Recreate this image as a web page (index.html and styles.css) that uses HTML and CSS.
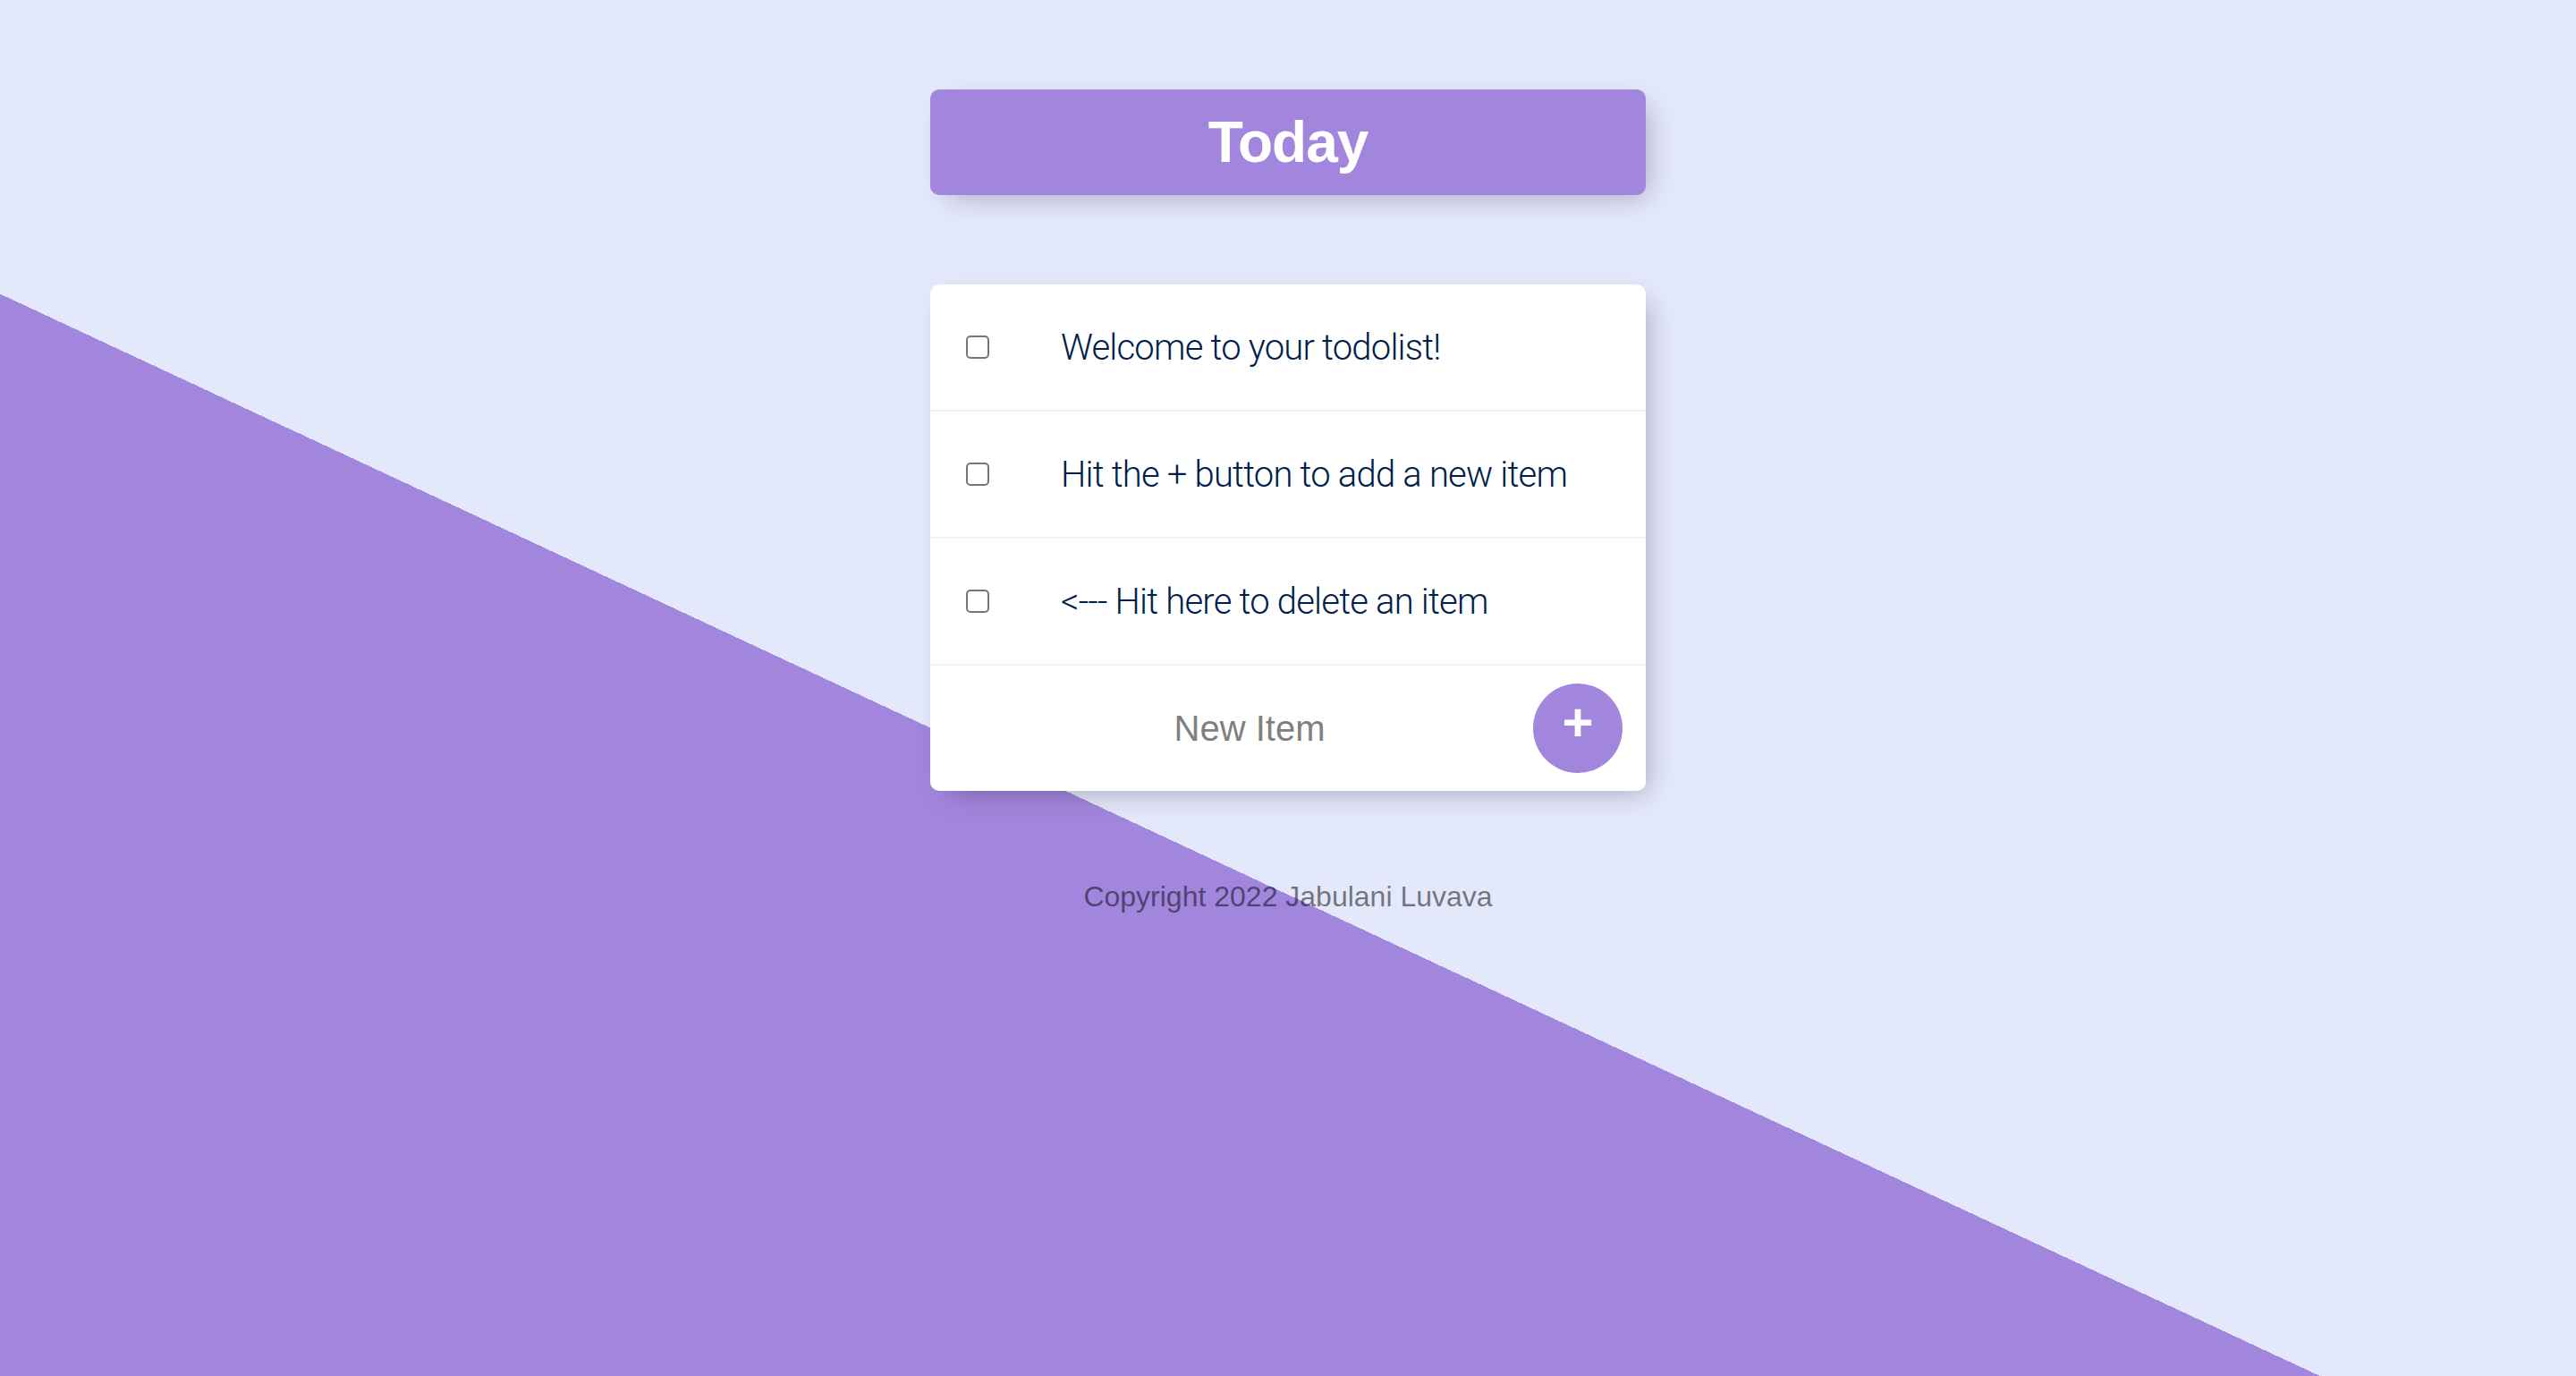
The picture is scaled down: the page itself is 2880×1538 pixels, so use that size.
FILE: index.html
```html
<!DOCTYPE html>
<html lang="en">
<head>
<meta charset="utf-8">
<title>To Do List</title>
<link rel="stylesheet" href="styles.css">
</head>
<body>
  <div class="box heading">
    <h1>Today</h1>
  </div>
  <div class="box">
    <div class="item">
      <input type="checkbox" class="check">
      <p>Welcome to your todolist!</p>
    </div>
    <div class="item">
      <input type="checkbox" class="check">
      <p>Hit the + button to add a new item</p>
    </div>
    <div class="item">
      <input type="checkbox" class="check">
      <p>&lt;--- Hit here to delete an item</p>
    </div>
    <form class="item new-form"><input type="text" class="new-input" placeholder="New Item" autocomplete="off"><button type="button" class="add-btn">+</button></form>
  </div>
  <footer class="footer">Copyright 2022 Jabulani Luvava</footer>
</body>
</html>
```
FILE: styles.css
```css
html {
  background-color: #E4E8FB;
  background-image: linear-gradient(25deg, #A286DE 50%, #E4E8FB 50%);
  min-height: 2000px;
  font-family: "Liberation Sans", Arial, sans-serif;
  font-size: 32px;
}

body {
  margin: 0;
  padding: 0 16px;
}

.box {
  max-width: 800px;
  margin: 100px auto;
  background: #fff;
  border-radius: 10px;
  box-shadow: 10px 10px 30px -10px rgba(0, 0, 0, 0.3);
}

.heading {
  background-color: #A286DE;
  text-align: center;
}

.heading h1 {
  color: #fff;
  padding: 20px;
  margin: 0;
  font-size: 64px;
  font-weight: bold;
  line-height: 78px;
  letter-spacing: -1px;
}

.item {
  min-height: 140px;
  display: flex;
  align-items: center;
  border-bottom: 2px solid #F1F1F1;
}

.item:last-child {
  border-bottom: 0;
}

.check {
  appearance: none;
  -webkit-appearance: none;
  width: 26px;
  height: 26px;
  margin: 40px;
  border: 2px solid #767676;
  border-radius: 5px;
  background: #fff;
  flex: none;
}

.item p {
  margin: 0;
  padding: 40px;
  font-family: Roboto, "Liberation Sans", sans-serif;
  font-size: 40px;
  font-weight: 300;
  letter-spacing: -0.8px;
  color: #00204a;
}

.new-form {
  margin-left: 40px;
  text-align: center;
}

.new-input {
  text-align: center;
  height: 120px;
  border: none;
  padding: 2px 4px;
  font-family: "Liberation Sans", Arial, sans-serif;
  font-size: 40px;
  font-weight: 200;
  width: 626px;
  background: transparent;
  outline: none;
}

.new-input::placeholder {
  color: grey;
  opacity: 1;
}

.add-btn {
  min-height: 100px;
  width: 100px;
  border-radius: 50%;
  border: 0;
  background-color: #A286DE;
  color: #fff;
  font-family: "Liberation Sans", Arial, sans-serif;
  font-size: 60px;
  font-weight: bold;
  padding: 0 0 12px 0;
  line-height: 1;
}

.footer {
  color: rgba(0, 0, 0, 0.5);
  text-align: center;
  font-size: 32px;
}
```
